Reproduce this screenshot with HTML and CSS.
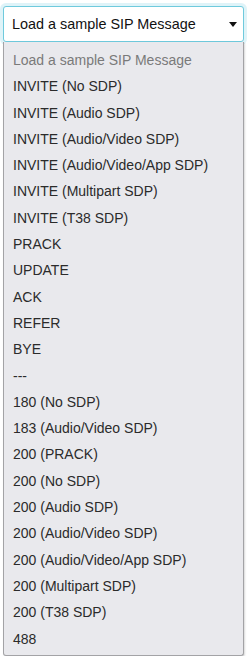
FILE: index.html
```html
<!DOCTYPE html>
<html lang="en">
<head>
  <meta charset="UTF-8">
  <meta name="viewport" content="width=device-width, initial-scale=1.0">
  <title>SIP Message Samples</title>
  <link rel="stylesheet" href="styles.css">
</head>
<body>
  <div class="sample-picker">
    <div class="picker-box">
      <span>Load a sample SIP Message</span>
      <span class="picker-arrow"></span>
    </div>
    <ul class="picker-list">
      <li class="placeholder">Load a sample SIP Message</li>
      <li>INVITE (No SDP)</li>
      <li>INVITE (Audio SDP)</li>
      <li>INVITE (Audio/Video SDP)</li>
      <li>INVITE (Audio/Video/App SDP)</li>
      <li>INVITE (Multipart SDP)</li>
      <li>INVITE (T38 SDP)</li>
      <li>PRACK</li>
      <li>UPDATE</li>
      <li>ACK</li>
      <li>REFER</li>
      <li>BYE</li>
      <li>---</li>
      <li>180 (No SDP)</li>
      <li>183 (Audio/Video SDP)</li>
      <li>200 (PRACK)</li>
      <li>200 (No SDP)</li>
      <li>200 (Audio SDP)</li>
      <li>200 (Audio/Video SDP)</li>
      <li>200 (Audio/Video/App SDP)</li>
      <li>200 (Multipart SDP)</li>
      <li>200 (T38 SDP)</li>
      <li>488</li>
    </ul>
  </div>
</body>
</html>
```

FILE: styles.css
```css
body {
  margin: 0;
  padding: 6px 5px 0 3px;
  background: #ffffff;
  font-family: "Liberation Sans", Arial, sans-serif;
}

.sample-picker {
  width: 241px;
}

.picker-box {
  box-sizing: border-box;
  height: 36px;
  display: flex;
  align-items: center;
  justify-content: space-between;
  padding: 0 6px 0 8px;
  background: #ffffff;
  border: 1px solid #6fcadd;
  border-radius: 3px;
  box-shadow: 0 0 0 3px rgba(111, 202, 221, 0.22);
  color: #111;
  font-size: 14.4px;
}

.picker-arrow {
  width: 0;
  height: 0;
  border-left: 4px solid transparent;
  border-right: 4px solid transparent;
  border-top: 5px solid #111;
}

.picker-list {
  list-style: none;
  margin: 0;
  padding: 5px 0 3px;
  background: #e9e9ed;
  border: 1px solid #a3a3a6;
  border-top: none;
  border-radius: 0 0 3px 3px;
  box-shadow: 1px 1px 2px rgba(0, 0, 0, 0.15);
}

.picker-list li {
  height: 26.3px;
  line-height: 26.3px;
  padding-left: 9px;
  font-size: 14px;
  color: #2b2b2b;
  white-space: nowrap;
}

.picker-list .placeholder {
  color: #7a7a7a;
}
```
